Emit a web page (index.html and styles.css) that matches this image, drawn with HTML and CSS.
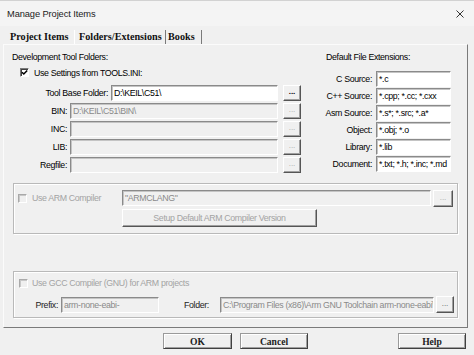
FILE: index.html
```html
<!DOCTYPE html>
<html>
<head>
<meta charset="utf-8">
<title>Manage Project Items</title>
<link rel="stylesheet" href="styles.css">
</head>
<body>
<div class="win">
  <div class="titlebar">
    <span class="title">Manage Project Items</span>
    <svg class="close" viewBox="0 0 8 8"><path d="M0.5 0.5L7.5 7.5M7.5 0.5L0.5 7.5" stroke="#333" stroke-width="1" fill="none"/></svg>
  </div>
  <div class="tabs">
    <div class="tab t1">Project Items</div>
    <div class="tab t2">Folders/Extensions</div>
    <div class="tab t3">Books</div>
  </div>
  <div class="panel">
    <div class="top">
      <div class="folders">
        <div class="head">Development Tool Folders:</div>
        <div class="chkrow">
          <span class="chk on"><svg viewBox="0 0 7 7"><path d="M1 3.2L2.8 5L6.2 1.4" stroke="#000" stroke-width="1.5" fill="none"/></svg></span>
          <span>Use Settings from TOOLS.INI:</span>
        </div>
        <div class="rows">
          <div class="row"><span class="lbl wide">Tool Base Folder:</span><div class="edit w1">D:\KEIL\C51\</div><div class="sbtn">...</div></div>
          <div class="row"><span class="lbl">BIN:</span><div class="edit w2 dis">D:\KEIL\C51\BIN\</div><div class="sbtn dis">...</div></div>
          <div class="row"><span class="lbl">INC:</span><div class="edit w2 dis"></div><div class="sbtn dis">...</div></div>
          <div class="row"><span class="lbl">LIB:</span><div class="edit w2 dis"></div><div class="sbtn dis">...</div></div>
          <div class="row"><span class="lbl">Regfile:</span><div class="edit w2 dis"></div><div class="sbtn dis">...</div></div>
        </div>
      </div>
      <div class="ext">
        <div class="head ehead">Default File Extensions:</div>
        <div class="erows">
          <div class="erow"><span class="elbl">C Source:</span><div class="edit ew">*.c</div></div>
          <div class="erow"><span class="elbl">C++ Source:</span><div class="edit ew">*.cpp; *.cc; *.cxx</div></div>
          <div class="erow"><span class="elbl">Asm Source:</span><div class="edit ew">*.s*; *.src; *.a*</div></div>
          <div class="erow"><span class="elbl">Object:</span><div class="edit ew">*.obj; *.o</div></div>
          <div class="erow"><span class="elbl">Library:</span><div class="edit ew">*.lib</div></div>
          <div class="erow"><span class="elbl">Document:</span><div class="edit ew">*.txt; *.h; *.inc; *.md</div></div>
        </div>
      </div>
    </div>
    <div class="group arm">
      <div class="armgrid">
        <div class="gchk"><span class="chk dchk"></span><span class="gray">Use ARM Compiler</span></div>
        <div class="edit dis armedit">"ARMCLANG"</div>
        <div class="sbtn dis armdots">...</div>
        <div class="pbtn setup gray">Setup Default ARM Compiler Version</div>
      </div>
    </div>
    <div class="group gcc">
      <div class="gchk gccchk"><span class="chk dchk"></span><span class="gray">Use GCC Compiler (GNU) for ARM projects</span></div>
      <div class="gccrow">
        <span class="plbl">Prefix:</span>
        <div class="edit dis pedit">arm-none-eabi-</div>
        <span class="plbl flbl">Folder:</span>
        <div class="edit dis fedit">C:\Program Files (x86)\Arm GNU Toolchain arm-none-eabi\</div>
        <div class="sbtn gdots">...</div>
      </div>
    </div>
  </div>
  <div class="buttons">
    <div class="pbtn dlg ok">OK</div>
    <div class="pbtn dlg cancel">Cancel</div>
    <div class="pbtn dlg help">Help</div>
  </div>
</div>
</body>
</html>
```
FILE: styles.css
```css
* { box-sizing: border-box; margin: 0; padding: 0; }
html, body { width: 474px; height: 355px; overflow: hidden; }
body {
  background: #f0f0f0;
  font-family: "Liberation Sans", Arial, sans-serif;
  font-size: 8.8px;
  letter-spacing: -0.35px;
  color: #000;
}
.win { width: 474px; height: 355px; }

.titlebar {
  height: 26px;
  display: flex;
  align-items: center;
  padding-left: 7px;
  background: #f4f4f4;
  border-top: 1px solid #d2d2d2;
}
.title { font-size: 9.3px; letter-spacing: -0.1px; color: #1b1b1b; }
.close { margin-left: auto; margin-right: 10px; width: 8px; height: 8px; }

.tabs {
  display: flex;
  height: 14px;
  margin-top: 4px;
  margin-left: 4px;
  font-family: "Liberation Serif", "Times New Roman", serif;
  font-weight: bold;
  font-size: 10.2px;
  letter-spacing: 0;
  color: #111;
}
.tab { height: 14px; line-height: 13px; white-space: nowrap; }
.t1 { width: 70px; padding-left: 6px; }
.t2 { width: 92px; padding-left: 4px; border-right: 1px solid #7a7a7a; border-left: 1px solid #fff; }
.t3 { width: 36px; padding-left: 2px; border-right: 1px solid #7a7a7a; }

.panel {
  margin-left: 3px;
  width: 465px;
  height: 284px;
  border: 1px solid;
  border-color: #fbfbfb #7a7a7a #7a7a7a #fbfbfb;
}
.top { display: flex; padding-left: 8px; height: 128px; }
.folders { width: 289px; padding-top: 7px; }
.head { height: 10px; line-height: 10px; white-space: nowrap; }
.chkrow { display: flex; align-items: center; height: 11px; margin-top: 5px; padding-left: 8px; gap: 5px; white-space: nowrap; }
.chk {
  width: 9px; height: 9px;
  border: 1px solid;
  border-color: #7a7a7a #fff #fff #7a7a7a;
  box-shadow: inset 1px 1px #404040;
  background: #fff;
  display: flex;
  flex-shrink: 0;
}
.chk svg { width: 7px; height: 7px; margin: 0 0 0 0; }
.chk.dchk { background: #f0f0f0; border-color: #a9a9a9 #fff #fff #a9a9a9; box-shadow: inset 1px 1px #c8c8c8; }

.rows { margin-top: 7px; }
.row { display: flex; align-items: center; height: 16px; margin-bottom: 2px; }
.lbl { width: 55px; margin-right: 3px; text-align: right; white-space: nowrap; }
.lbl.wide { width: 96px; }

.edit {
  height: 16px;
  line-height: 14px;
  padding-left: 2px;
  border: 1px solid;
  border-color: #8a8a8a #fff #fff #8a8a8a;
  box-shadow: inset 1px 1px #c4c4c4;
  background: #fff;
  white-space: nowrap;
  overflow: hidden;
}
.edit.dis { background: #f0f0f0; color: #8a8a8a; }
.w1 { width: 167px; }
.w2 { width: 208px; }

.sbtn {
  width: 18px; height: 16px;
  margin-left: 5px;
  border: 1px solid;
  border-color: #fff #555 #555 #fff;
  box-shadow: inset -1px -1px #a0a0a0;
  display: flex;
  align-items: center;
  justify-content: center;
  font-weight: bold;
  font-size: 8px;
  letter-spacing: 0;
  line-height: 10px;
  padding-bottom: 2px;
}
.sbtn.dis { color: #a8a8a8; font-weight: normal; }

.ext { margin-left: 15px; width: 135px; padding-top: 7px; }
.ehead { padding-left: 10px; }
.erows { margin-top: 9px; }
.erow { display: flex; align-items: center; height: 16px; margin-bottom: 1px; }
.elbl { width: 56px; margin-right: 4px; text-align: right; white-space: nowrap; }
.ew { width: 75px; }

.group {
  margin-left: 9px;
  width: 445px;
  border: 1px solid #b9b9b9;
  box-shadow: inset 1px 1px #fff, 1px 1px #fff;
}
.arm { margin-top: 10px; height: 51px; padding: 6px 0 0 4px; }
.armgrid {
  display: grid;
  grid-template-columns: 102px 309px 20px;
  grid-template-rows: 16px 18px;
  column-gap: 2px;
  row-gap: 3px;
}
.gchk { display: flex; align-items: center; gap: 5px; white-space: nowrap; }
.gray { color: #a3a3a3; }
.armedit { color: #555; }
.armdots { margin-left: 0; width: 20px; height: 17px; }
.setup { grid-column: 2; width: 195px; height: 18px; }

.gcc { margin-top: 37px; height: 47px; padding: 6px 0 0 5px; }
.gccchk { height: 10px; gap: 4px; }
.gccrow { display: flex; align-items: center; height: 17px; margin-top: 8px; padding-left: 15px; }
.plbl { width: 24px; margin-right: 3px; text-align: right; white-space: nowrap; color: #222; }
.flbl { margin-left: 25px; margin-right: 12px; }
.pedit { width: 98px; height: 16px; }
.fedit { width: 214px; height: 16px; color: #777; }
.gdots { margin-left: 2px; height: 17px; font-weight: normal; color: #555; }

.pbtn {
  border: 1px solid;
  border-color: #fff #555 #555 #fff;
  box-shadow: inset -1px -1px #a0a0a0;
  background: #f0f0f0;
  display: flex;
  align-items: center;
  justify-content: center;
  white-space: nowrap;
}
.buttons { display: flex; margin-top: 5px; padding-left: 163px; height: 16px; }
.dlg {
  height: 16px;
  font-family: "Liberation Serif", "Times New Roman", serif;
  font-weight: bold;
  font-size: 9.6px;
  letter-spacing: 0;
  color: #222;
  border-color: #9a9a9a #404040 #404040 #9a9a9a;
  box-shadow: inset 1px 1px #fff, inset -1px -1px #a0a0a0;
}
.ok { width: 69px; }
.cancel { width: 68px; margin-left: 8px; }
.help { width: 68px; margin-left: 90px; }
```
